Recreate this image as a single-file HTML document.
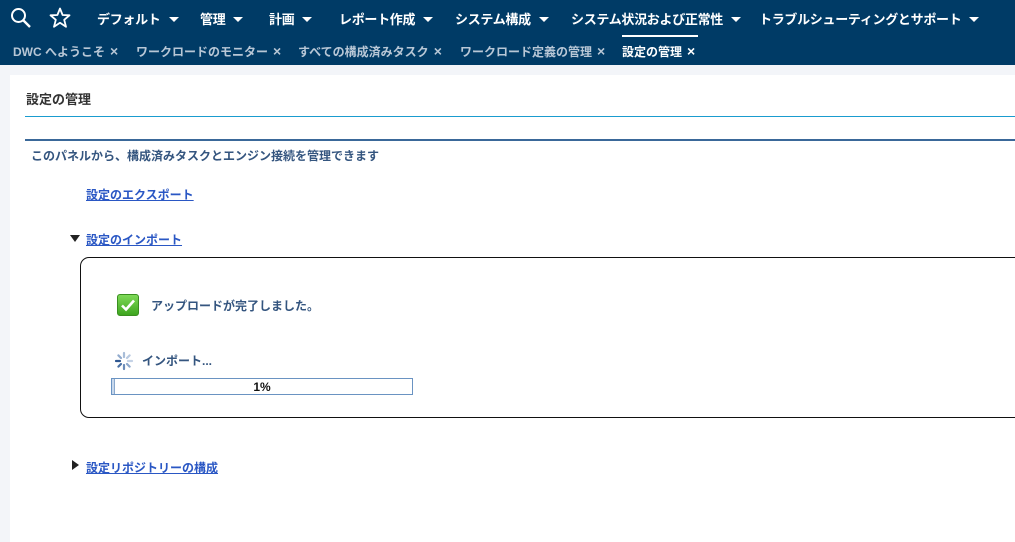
<!DOCTYPE html>
<html><head><meta charset="utf-8"><style>
*{margin:0;padding:0;box-sizing:border-box}
body{width:1015px;height:542px;overflow:hidden;background:#f3f5f9;font-family:"Liberation Sans","Noto Sans CJK JP",sans-serif;position:relative}
.hdr{position:absolute;left:0;top:0;width:1015px;height:65px;background:#003b66}
.t{position:absolute;white-space:nowrap}
.m{color:#fff;font-size:13px;font-weight:bold;top:9px;letter-spacing:-0.3px}
.m .c{display:inline-block;width:0;height:0;border-left:5px solid transparent;border-right:5px solid transparent;border-top:5px solid #fff;margin-left:8px;vertical-align:2px}
.tab{color:#b8c7d6;font-size:12px;font-weight:bold;top:43px}
.tab b{color:#b8c7d6;margin-left:5px;font-size:14px}
.main{position:absolute;left:10px;top:75px;width:1005px;height:467px;background:#fff}
a{color:#2a57c4;text-decoration:underline;font-size:12px;font-weight:bold}
</style></head><body>
<div class="hdr">
<svg style="position:absolute;left:10px;top:7px" width="22" height="22" viewBox="0 0 22 22"><circle cx="8.5" cy="8.5" r="6.5" fill="none" stroke="#fff" stroke-width="2"/><line x1="13.5" y1="13.5" x2="20" y2="20" stroke="#fff" stroke-width="2.4"/></svg>
<svg style="position:absolute;left:49px;top:7px" width="22" height="22" viewBox="0 0 22 22"><polygon points="11,1.5 13.6,8 20.5,8.3 15.2,12.8 17,19.8 11,15.8 5,19.8 6.8,12.8 1.5,8.3 8.4,8" fill="none" stroke="#fff" stroke-width="1.8" stroke-linejoin="round"/></svg>
<div class="t m" style="left:97px">デフォルト<span class="c"></span></div>
<div class="t m" style="left:200px">管理<span class="c"></span></div>
<div class="t m" style="left:269px">計画<span class="c"></span></div>
<div class="t m" style="left:339px">レポート作成<span class="c"></span></div>
<div class="t m" style="left:455px">システム構成<span class="c"></span></div>
<div class="t m" style="left:571px">システム状況および正常性<span class="c"></span></div>
<div class="t m" style="left:759px">トラブルシューティングとサポート<span class="c"></span></div>
<div class="t tab" style="left:13px">DWC へようこそ<b>×</b></div>
<div class="t tab" style="left:136px">ワークロードのモニター<b>×</b></div>
<div class="t tab" style="left:298px">すべての構成済みタスク<b>×</b></div>
<div class="t tab" style="left:460px">ワークロード定義の管理<b>×</b></div>
<div class="t tab" style="left:622px;color:#fff">設定の管理<b style="color:#fff">×</b></div>
<div style="position:absolute;left:622px;top:35px;width:76px;height:2px;background:#fff"></div>
</div>
<div class="main">
<div class="t" style="left:16px;top:14px;font-size:13px;font-weight:bold;color:#333">設定の管理</div>
<div style="position:absolute;left:15px;top:41px;width:990px;height:1px;background:#1a9ccf"></div>
<div style="position:absolute;left:15px;top:64px;width:990px;height:2px;background:#3a6899"></div>
<div class="t" style="left:21px;top:72px;font-size:12px;font-weight:bold;color:#34557f">このパネルから、構成済みタスクとエンジン接続を管理できます</div>
<div class="t" style="left:76px;top:111px"><a>設定のエクスポート</a></div>
<div class="t" style="left:60px;top:160px;width:0;height:0;border-left:5px solid transparent;border-right:5px solid transparent;border-top:7px solid #222"></div>
<div class="t" style="left:76px;top:156px"><a>設定のインポート</a></div>
<div style="position:absolute;left:70px;top:182px;width:945px;height:161px;border:1px solid #111;border-radius:9px"></div>
<div style="position:absolute;left:107px;top:219px;width:22px;height:22px;border-radius:3px;background:linear-gradient(#7ed957,#3ea51f);border:1px solid #3a8f20"><svg width="20" height="20" viewBox="0 0 20 20"><path d="M4 10.5l4 4 8-9" fill="none" stroke="#fff" stroke-width="2.6"/></svg></div>
<div class="t" style="left:141px;top:222px;font-size:12px;font-weight:bold;color:#34557f">アップロードが完了しました。</div>
<svg style="position:absolute;left:104px;top:276px" width="20" height="20" viewBox="0 0 20 20"><g stroke-width="2.2" stroke-linecap="round"><line x1="10" y1="2" x2="10" y2="6" stroke="#a8bdd8"/><line x1="15.6" y1="4.4" x2="13" y2="7" stroke="#b8c9e0"/><line x1="18" y1="10" x2="14" y2="10" stroke="#c4d2e6"/><line x1="15.6" y1="15.6" x2="13" y2="13" stroke="#8ca7cb"/><line x1="10" y1="18" x2="10" y2="14" stroke="#6a8bb8"/><line x1="4.4" y1="15.6" x2="7" y2="13" stroke="#4a70a5"/><line x1="2" y1="10" x2="6" y2="10" stroke="#2e5690"/><line x1="4.4" y1="4.4" x2="7" y2="7" stroke="#90aacd"/></g></svg>
<div class="t" style="left:132px;top:277px;font-size:12px;font-weight:bold;color:#34557f">インポート...</div>
<div style="position:absolute;left:101px;top:303px;width:302px;height:17px;border:1px solid #6a93c2;background:#fff"><div style="width:3px;height:15px;background:#c8d8ec;border-right:1px solid #8aa8cc"></div><div class="t" style="left:0;top:1px;width:300px;text-align:center;font-size:12px;font-weight:bold;color:#111">1%</div></div>
<div class="t" style="left:62px;top:385px;width:0;height:0;border-top:5px solid transparent;border-bottom:5px solid transparent;border-left:7px solid #222"></div>
<div class="t" style="left:76px;top:384px"><a>設定リポジトリーの構成</a></div>
</div>
</body></html>
